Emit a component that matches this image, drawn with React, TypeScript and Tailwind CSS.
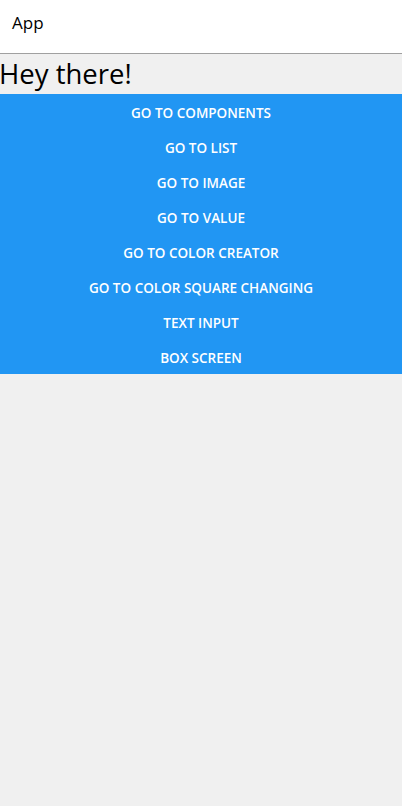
import React from "react";

const items = [
  "GO TO COMPONENTS",
  "GO TO LIST",
  "GO TO IMAGE",
  "GO TO VALUE",
  "GO TO COLOR CREATOR",
  "GO TO COLOR SQUARE CHANGING",
  "TEXT INPUT",
  "BOX SCREEN",
];

export default function App() {
  return (
    <div
      className="w-[402px] h-[806px] bg-[#f0f0f0] flex flex-col"
      style={{ fontFamily: '"Open Sans", "Noto Sans", sans-serif' }}
    >
      <div className="h-[54px] bg-white border-b border-[#a0a0a0] flex items-center px-3">
        <span className="text-[17px] text-black -mt-[8px]">App</span>
      </div>
      <div className="text-[27.5px] leading-[40px] text-black -ml-[1px]">Hey there!</div>
      <div className="bg-[#2196f3] flex flex-col">
        {items.map((t) => (
          <div
            key={t}
            className="h-[35px] pt-[3px] flex items-center justify-center text-white text-[13.5px] font-semibold"
          >
            {t}
          </div>
        ))}
      </div>
    </div>
  );
}
